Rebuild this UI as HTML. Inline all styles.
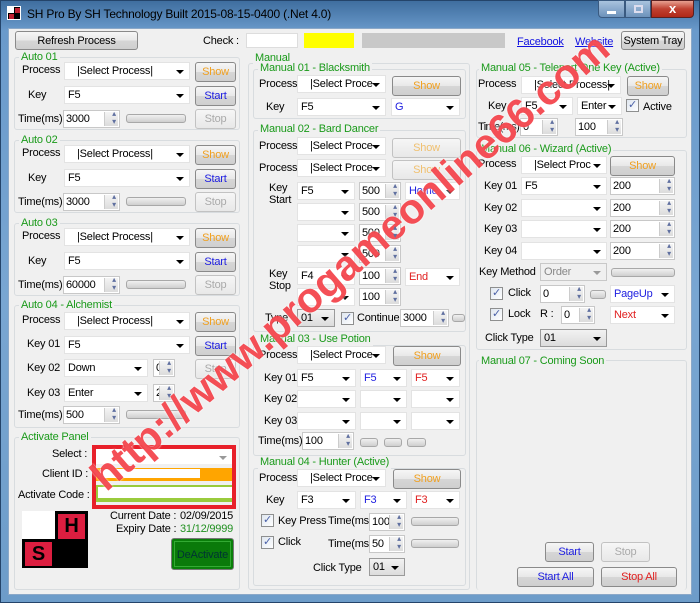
<!DOCTYPE html>
<html><head><meta charset="utf-8">
<style>
*{margin:0;padding:0;box-sizing:border-box}
body{width:700px;height:603px;overflow:hidden;font:11px "Liberation Sans",sans-serif;letter-spacing:-0.2px;color:#000;background:#5a8cc0;position:relative}
#frame{position:absolute;left:0;top:0;width:700px;height:603px;background:linear-gradient(180deg,#3f6e9f 0,#6a9acb 30px,#79a6d2 300px,#6d9cc9 603px);border:1px solid #24446a}
#body{position:absolute;left:8px;top:28px;width:684px;height:567px;background:#f0f0f0;border:1px solid #8ba8c8}
div{position:absolute}
.t{white-space:nowrap;line-height:14px}
.g{color:#209020}
.gb{border:1px solid #d8dcdf;border-radius:3px}
.gt{background:#f0f0f0;padding:0 2px;color:#1a9a1a;white-space:nowrap;line-height:13px}
.cb{height:18px;background:#fff;border:1px solid #e3e3e3;line-height:16px;padding-left:3px;white-space:nowrap;overflow:hidden}
.cb:after{content:"";position:absolute;right:5px;top:7px;border-left:4px solid transparent;border-right:4px solid transparent;border-top:4px solid #000}
.dis{background:#f0f0f0;border-color:#c8c8c8;color:#888}
.dis:after{border-top-color:#999}
.gr{background:linear-gradient(#f2f2f2,#dcdcdc);border-color:#9a9a9a}
.nm{height:18px;background:#fff;border:1px solid #c8c8c8;line-height:16px;padding-left:2px}
.nm:after{content:"";position:absolute;right:1px;top:1px;width:13px;height:14px;background:linear-gradient(#f4f4f4,#dcdcdc);border-left:1px solid #ccc}
.nm:before{content:"▴\A▾";white-space:pre;position:absolute;right:3px;top:-1px;font-size:8px;line-height:8px;color:#6070a0;z-index:1}
.bt{height:20px;border:1px solid #8a8a8a;border-radius:3px;background:linear-gradient(#f6f6f6 0,#e8e8e8 50%,#d6d6d6 51%,#cfcfcf 100%);text-align:center;line-height:18px;white-space:nowrap}
.bd{border-color:#c2c2c2;color:#aaa;background:linear-gradient(#f6f6f6,#e8e8e8)}
.pb{height:9px;border:1px solid #a8a8a8;border-radius:3px;background:linear-gradient(#f0f0f0,#cfcfcf)}
.ck{width:13px;height:13px;border:1px solid #8e8f8f;background:linear-gradient(135deg,#dfe6ef,#fff);font-size:11px;line-height:11px;text-align:center;color:#4b61a8}
.o{color:#f0a020}.b{color:#2020e0}.r{color:#e02020}.s{color:#aaa}
</style></head><body>
<div id="frame"></div>
<div style="left:7px;top:6px;width:14px;height:14px;background:#000;border:1px solid #fff"><div style="left:0;top:0;width:6px;height:6px;background:#fff"></div><div style="left:7px;top:1px;width:5px;height:5px;background:#c02030"></div><div style="left:1px;top:7px;width:5px;height:5px;background:#c02030"></div></div>
<div class="t" style="left:27px;top:7px;font-size:12px">SH Pro By SH Technology Built 2015-08-15-0400 (.Net 4.0)</div>
<div style="left:598px;top:0;width:27px;height:18px;border:1px solid #3a5a80;border-radius:0 0 0 4px;background:linear-gradient(#a9c3de,#6d92bb)"><div style="left:8px;top:10px;width:9px;height:3px;background:#fff"></div></div>
<div style="left:625px;top:0;width:26px;height:18px;border:1px solid #3a5a80;background:linear-gradient(#a9c3de,#6d92bb)"><div style="left:8px;top:4px;width:9px;height:8px;border:2px solid #dde"></div></div>
<div style="left:651px;top:0;width:43px;height:18px;border:1px solid #5a2020;border-radius:0 0 4px 0;background:linear-gradient(#e8a090,#c04030 50%,#b02818);color:#fff;font-weight:bold;text-align:center;line-height:16px;font-size:13px">x</div>
<div id="body"></div>
<div class="bt" style="left:15px;top:31px;width:123px;height:19px">Refresh Process</div>
<div class="t" style="left:203px;top:34px">Check :</div>
<div style="left:246px;top:33px;width:52px;height:15px;background:#fff;border:1px solid #ddd"></div>
<div style="left:304px;top:33px;width:50px;height:15px;background:#ffff00"></div>
<div style="left:362px;top:33px;width:143px;height:15px;background:#c8c8c8"></div>
<div class="t" style="left:517px;top:35px;text-decoration:underline;color:#1010e0">Facebook</div>
<div class="t" style="left:575px;top:35px;text-decoration:underline;color:#1010e0">Website</div>
<div class="bt" style="left:621px;top:31px;width:64px;height:19px">System Tray</div>

<div class="gb" style="left:14px;top:57px;width:226px;height:73px"></div><div class="t gt" style="left:19px;top:51px">Auto 01</div>
<div class="t" style="left:22px;top:63px">Process</div><div class="cb" style="left:64px;top:62px;width:126px;padding-left:12px">|Select Process|</div><div class="bt o" style="left:195px;top:62px;width:41px">Show</div>
<div class="t" style="left:28px;top:88px">Key</div><div class="cb" style="left:64px;top:86px;width:126px">F5</div><div class="bt b" style="left:195px;top:86px;width:41px">Start</div>
<div class="t" style="left:18px;top:112px">Time(ms)</div><div class="nm" style="left:63px;top:110px;width:57px">3000</div><div class="pb" style="left:126px;top:114px;width:60px"></div><div class="bt bd" style="left:195px;top:109px;width:41px">Stop</div>

<div class="gb" style="left:14px;top:140px;width:226px;height:73px"></div><div class="t gt" style="left:19px;top:134px">Auto 02</div>
<div class="t" style="left:22px;top:146px">Process</div><div class="cb" style="left:64px;top:145px;width:126px;padding-left:12px">|Select Process|</div><div class="bt o" style="left:195px;top:145px;width:41px">Show</div>
<div class="t" style="left:28px;top:171px">Key</div><div class="cb" style="left:64px;top:169px;width:126px">F5</div><div class="bt b" style="left:195px;top:169px;width:41px">Start</div>
<div class="t" style="left:18px;top:195px">Time(ms)</div><div class="nm" style="left:63px;top:193px;width:57px">3000</div><div class="pb" style="left:126px;top:197px;width:60px"></div><div class="bt bd" style="left:195px;top:192px;width:41px">Stop</div>

<div class="gb" style="left:14px;top:223px;width:226px;height:73px"></div><div class="t gt" style="left:19px;top:217px">Auto 03</div>
<div class="t" style="left:22px;top:229px">Process</div><div class="cb" style="left:64px;top:228px;width:126px;padding-left:12px">|Select Process|</div><div class="bt o" style="left:195px;top:228px;width:41px">Show</div>
<div class="t" style="left:28px;top:254px">Key</div><div class="cb" style="left:64px;top:252px;width:126px">F5</div><div class="bt b" style="left:195px;top:252px;width:41px">Start</div>
<div class="t" style="left:18px;top:278px">Time(ms)</div><div class="nm" style="left:63px;top:276px;width:57px">60000</div><div class="pb" style="left:126px;top:280px;width:60px"></div><div class="bt bd" style="left:195px;top:275px;width:41px">Stop</div>

<div class="gb" style="left:14px;top:305px;width:226px;height:123px"></div><div class="t gt" style="left:19px;top:299px">Auto 04 - Alchemist</div>
<div class="t" style="left:22px;top:313px">Process</div><div class="cb" style="left:64px;top:312px;width:126px;padding-left:12px">|Select Process|</div><div class="bt o" style="left:195px;top:312px;width:41px">Show</div>
<div class="t" style="left:27px;top:337px">Key 01</div><div class="cb" style="left:64px;top:336px;width:126px">F5</div><div class="bt b" style="left:195px;top:336px;width:41px">Start</div>
<div class="t" style="left:27px;top:361px">Key 02</div><div class="cb" style="left:64px;top:359px;width:84px">Down</div><div class="nm" style="left:153px;top:359px;width:22px">0</div><div class="bt bd" style="left:195px;top:359px;width:41px">Stop</div>
<div class="t" style="left:27px;top:386px">Key 03</div><div class="cb" style="left:64px;top:384px;width:84px">Enter</div><div class="nm" style="left:153px;top:384px;width:22px">2</div>
<div class="t" style="left:18px;top:408px">Time(ms)</div><div class="nm" style="left:63px;top:406px;width:57px">500</div><div class="pb" style="left:126px;top:410px;width:60px"></div>

<div class="gb" style="left:14px;top:437px;width:226px;height:153px"></div><div class="t gt" style="left:19px;top:431px">Activate Panel</div>
<div class="t" style="left:52px;top:447px">Select :</div>
<div class="t" style="left:42px;top:467px">Client ID :</div>
<div class="t" style="left:18px;top:488px">Activate Code :</div>
<div style="left:92px;top:445px;width:144px;height:64px;border:4px solid #e8202a"></div>
<div class="cb dis" style="left:96px;top:449px;width:136px;height:15px;border:none;background:#fff"></div>
<div style="left:96px;top:468px;width:136px;height:13px;background:#ffa500"><div style="left:4px;top:1px;width:100px;height:9px;background:#fff"></div></div>
<div style="left:96px;top:485px;width:136px;height:17px;background:#9acb3c"><div style="left:2px;top:2px;width:134px;height:11px;background:#fff"></div></div>
<div style="left:22px;top:511px;width:66px;height:57px;background:#000">
<div style="left:0;top:0;width:33px;height:28px;background:#fff"></div>
<div style="left:36px;top:3px;width:27px;height:25px;background:#dc1e40;color:#000;font:bold 20px 'Liberation Sans';text-align:center;line-height:25px">H</div>
<div style="left:3px;top:31px;width:27px;height:24px;background:#dc1e40;color:#000;font:bold 20px 'Liberation Sans';text-align:center;line-height:24px">S</div></div>
<div class="t" style="left:110px;top:509px">Current Date :</div><div class="t" style="left:180px;top:509px">02/09/2015</div>
<div class="t" style="left:116px;top:522px">Expiry Date :</div><div class="t g" style="left:180px;top:522px">31/12/9999</div>
<div style="left:171px;top:538px;width:63px;height:32px;border:1px solid #777;border-radius:3px;background:#0a7f0a;padding:2px"><div style="left:2px;top:2px;right:2px;bottom:2px;background:#0a7a0a;border:1px solid #3a3;text-align:center;line-height:26px;color:#033">DeActivate</div></div>

<div class="gb" style="left:248px;top:63px;width:222px;height:527px"></div><div class="t gt" style="left:253px;top:52px">Manual</div>
<div class="gb" style="left:253px;top:69px;width:213px;height:50px"></div><div class="t gt" style="left:258px;top:62px">Manual 01 - Blacksmith</div>
<div class="t" style="left:259px;top:77px">Process</div><div class="cb" style="left:297px;top:75px;width:89px;padding-left:12px">|Select Proce</div><div class="bt o" style="left:392px;top:76px;width:69px">Show</div>
<div class="t" style="left:266px;top:100px">Key</div><div class="cb" style="left:297px;top:98px;width:89px">F5</div><div class="cb b" style="left:391px;top:98px;width:69px">G</div>

<div class="gb" style="left:253px;top:130px;width:213px;height:202px"></div><div class="t gt" style="left:258px;top:123px">Manual 02 - Bard Dancer</div>
<div class="t" style="left:259px;top:139px">Process</div><div class="cb" style="left:297px;top:137px;width:89px;padding-left:12px">|Select Proce</div><div class="bt bd" style="left:392px;top:138px;width:69px;color:#f0c070">Show</div>
<div class="t" style="left:259px;top:161px">Process</div><div class="cb" style="left:297px;top:159px;width:89px;padding-left:12px">|Select Proce</div><div class="bt bd" style="left:392px;top:160px;width:69px;color:#f0c070">Show</div>
<div class="t" style="left:269px;top:182px;line-height:12px">Key<br>Start</div>
<div class="cb" style="left:297px;top:182px;width:58px">F5</div><div class="nm" style="left:359px;top:182px;width:42px">500</div><div class="cb b" style="left:405px;top:182px;width:55px">Home</div>
<div class="cb" style="left:297px;top:203px;width:58px"></div><div class="nm" style="left:359px;top:203px;width:42px">500</div>
<div class="cb" style="left:297px;top:224px;width:58px"></div><div class="nm" style="left:359px;top:224px;width:42px">500</div>
<div class="cb" style="left:297px;top:245px;width:58px"></div><div class="nm" style="left:359px;top:245px;width:42px">500</div>
<div class="t" style="left:269px;top:268px;line-height:12px">Key<br>Stop</div>
<div class="cb" style="left:297px;top:267px;width:58px">F4</div><div class="nm" style="left:359px;top:267px;width:42px">100</div><div class="cb r" style="left:405px;top:268px;width:55px">End</div>
<div class="cb" style="left:297px;top:288px;width:58px"></div><div class="nm" style="left:359px;top:288px;width:42px">100</div>
<div class="t" style="left:265px;top:311px">Type</div><div class="cb gr" style="left:297px;top:309px;width:38px">01</div>
<div class="ck" style="left:341px;top:312px">✓</div><div class="t" style="left:357px;top:311px">Continue</div><div class="nm" style="left:400px;top:309px;width:49px">3000</div><div class="pb" style="left:452px;top:314px;width:13px;height:8px"></div>

<div class="gb" style="left:253px;top:345px;width:213px;height:111px"></div><div class="t gt" style="left:258px;top:333px">Manual 03 - Use Potion</div>
<div class="t" style="left:259px;top:348px">Process</div><div class="cb" style="left:297px;top:346px;width:89px;padding-left:12px">|Select Proce</div><div class="bt o" style="left:393px;top:346px;width:68px">Show</div>
<div class="t" style="left:264px;top:371px">Key 01</div><div class="cb" style="left:297px;top:369px;width:59px">F5</div><div class="cb b" style="left:360px;top:369px;width:47px">F5</div><div class="cb r" style="left:411px;top:369px;width:49px">F5</div>
<div class="t" style="left:264px;top:392px">Key 02</div><div class="cb" style="left:297px;top:390px;width:59px"></div><div class="cb" style="left:360px;top:390px;width:47px"></div><div class="cb" style="left:411px;top:390px;width:49px"></div>
<div class="t" style="left:264px;top:414px">Key 03</div><div class="cb" style="left:297px;top:412px;width:59px"></div><div class="cb" style="left:360px;top:412px;width:47px"></div><div class="cb" style="left:411px;top:412px;width:49px"></div>
<div class="t" style="left:258px;top:434px">Time(ms)</div><div class="nm" style="left:302px;top:432px;width:52px">100</div>
<div class="pb" style="left:360px;top:438px;width:18px"></div><div class="pb" style="left:384px;top:438px;width:18px"></div><div class="pb" style="left:407px;top:438px;width:19px"></div>

<div class="gb" style="left:253px;top:468px;width:213px;height:118px"></div><div class="t gt" style="left:258px;top:456px">Manual 04 - Hunter (Active)</div>
<div class="t" style="left:259px;top:471px">Process</div><div class="cb" style="left:297px;top:469px;width:89px;padding-left:12px">|Select Proce</div><div class="bt o" style="left:393px;top:469px;width:68px">Show</div>
<div class="t" style="left:266px;top:493px">Key</div><div class="cb" style="left:297px;top:491px;width:59px">F3</div><div class="cb b" style="left:360px;top:491px;width:47px">F3</div><div class="cb r" style="left:411px;top:491px;width:49px">F3</div>
<div class="ck" style="left:261px;top:514px">✓</div><div class="t" style="left:278px;top:514px">Key Press</div><div class="t" style="left:328px;top:514px">Time(ms)</div><div class="nm" style="left:369px;top:513px;width:36px">100</div><div class="pb" style="left:411px;top:517px;width:48px"></div>
<div class="ck" style="left:261px;top:536px">✓</div><div class="t" style="left:278px;top:535px">Click</div><div class="t" style="left:328px;top:537px">Time(ms)</div><div class="nm" style="left:369px;top:535px;width:36px">50</div><div class="pb" style="left:411px;top:539px;width:48px"></div>
<div class="t" style="left:313px;top:561px">Click Type</div><div class="cb gr" style="left:369px;top:558px;width:36px">01</div>

<div class="gb" style="left:476px;top:69px;width:211px;height:69px"></div><div class="t gt" style="left:479px;top:62px">Manual 05 - Teleport One Key (Active)</div>
<div class="t" style="left:478px;top:77px">Process</div><div class="cb" style="left:521px;top:76px;width:100px;padding-left:12px">|Select Process|</div><div class="bt o" style="left:627px;top:76px;width:42px">Show</div>
<div class="t" style="left:488px;top:99px">Key</div><div class="cb" style="left:521px;top:97px;width:52px">F5</div><div class="cb" style="left:577px;top:97px;width:45px">Enter</div><div class="ck" style="left:626px;top:99px">✓</div><div class="t" style="left:643px;top:100px">Active</div>
<div class="t" style="left:478px;top:120px;letter-spacing:-.6px">Time(ms)</div><div class="nm" style="left:520px;top:118px;width:38px">0</div><div class="nm" style="left:575px;top:118px;width:48px">100</div>

<div class="gb" style="left:476px;top:150px;width:211px;height:200px"></div><div class="t gt" style="left:479px;top:143px">Manual 06 - Wizard (Active)</div>
<div class="t" style="left:478px;top:157px">Process</div><div class="cb" style="left:521px;top:156px;width:86px;padding-left:12px">|Select Proc</div><div class="bt o" style="left:610px;top:156px;width:65px">Show</div>
<div class="t" style="left:484px;top:179px">Key 01</div><div class="cb" style="left:521px;top:177px;width:86px">F5</div><div class="nm" style="left:610px;top:177px;width:65px">200</div>
<div class="t" style="left:484px;top:201px">Key 02</div><div class="cb" style="left:521px;top:199px;width:86px"></div><div class="nm" style="left:610px;top:199px;width:65px">200</div>
<div class="t" style="left:484px;top:222px">Key 03</div><div class="cb" style="left:521px;top:220px;width:86px"></div><div class="nm" style="left:610px;top:220px;width:65px">200</div>
<div class="t" style="left:484px;top:244px">Key 04</div><div class="cb" style="left:521px;top:242px;width:86px"></div><div class="nm" style="left:610px;top:242px;width:65px">200</div>
<div class="t" style="left:479px;top:265px">Key Method</div><div class="cb dis" style="left:540px;top:263px;width:67px">Order</div><div class="pb" style="left:611px;top:268px;width:64px"></div>
<div class="ck" style="left:490px;top:287px">✓</div><div class="t" style="left:508px;top:286px">Click</div><div class="nm" style="left:540px;top:285px;width:45px">0</div><div class="pb" style="left:590px;top:290px;width:16px"></div><div class="cb b" style="left:610px;top:285px;width:65px">PageUp</div>
<div class="ck" style="left:490px;top:308px">✓</div><div class="t" style="left:508px;top:307px">Lock</div><div class="t" style="left:540px;top:307px">R :</div><div class="nm" style="left:561px;top:306px;width:34px">0</div><div class="cb r" style="left:610px;top:306px;width:65px">Next</div>
<div class="t" style="left:485px;top:331px">Click Type</div><div class="cb gr" style="left:540px;top:329px;width:67px">01</div>

<div class="gb" style="left:476px;top:360px;width:211px;height:230px;border-bottom:none"></div><div class="t gt" style="left:479px;top:355px">Manual 07 - Coming Soon</div>
<div class="bt b" style="left:545px;top:542px;width:49px">Start</div><div class="bt bd" style="left:601px;top:542px;width:49px">Stop</div>
<div class="bt b" style="left:517px;top:567px;width:77px">Start All</div><div class="bt r" style="left:601px;top:567px;width:76px">Stop All</div>

<div style="left:350px;top:262px;width:0;height:0"><div class="t" style="left:-360px;top:-26px;width:720px;text-align:center;transform:rotate(-41deg);font:bold 42px/52px 'Liberation Sans',sans-serif;letter-spacing:0;color:rgba(240,20,30,.75);text-shadow:0 0 2px #fff">http://www.progameonline66.com</div></div>
</body></html>
